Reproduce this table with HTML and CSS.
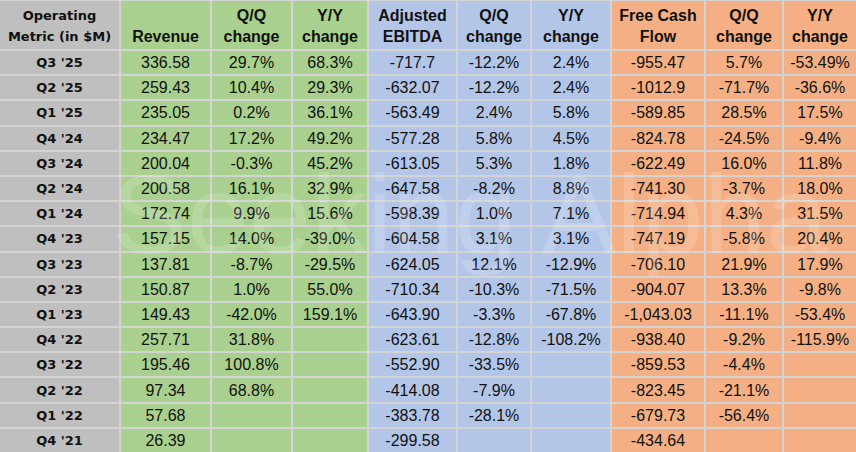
FILE: index.html
```html
<!DOCTYPE html>
<html>
<head>
<meta charset="utf-8">
<link rel="stylesheet" href="styles.css">
</head>
<body>
<div class="wrap">
  <div class="table">
    <div class="c h g"><span class="lbl">Operating<br>Metric (in $M)</span></div>
    <div class="c h gr">Revenue</div>
    <div class="c h gr">Q/Q<br>change</div>
    <div class="c h gr">Y/Y<br>change</div>
    <div class="c h bl">Adjusted<br>EBITDA</div>
    <div class="c h bl">Q/Q<br>change</div>
    <div class="c h bl">Y/Y<br>change</div>
    <div class="c h or">Free Cash<br>Flow</div>
    <div class="c h or">Q/Q<br>change</div>
    <div class="c h or">Y/Y<br>change</div>

    <div class="c q g">Q3 '25</div><div class="c gr">336.58</div><div class="c gr">29.7%</div><div class="c gr">68.3%</div><div class="c bl">-717.7</div><div class="c bl">-12.2%</div><div class="c bl">2.4%</div><div class="c or">-955.47</div><div class="c or">5.7%</div><div class="c or">-53.49%</div>
    <div class="c q g">Q2 '25</div><div class="c gr">259.43</div><div class="c gr">10.4%</div><div class="c gr">29.3%</div><div class="c bl">-632.07</div><div class="c bl">-12.2%</div><div class="c bl">2.4%</div><div class="c or">-1012.9</div><div class="c or">-71.7%</div><div class="c or">-36.6%</div>
    <div class="c q g">Q1 '25</div><div class="c gr">235.05</div><div class="c gr">0.2%</div><div class="c gr">36.1%</div><div class="c bl">-563.49</div><div class="c bl">2.4%</div><div class="c bl">5.8%</div><div class="c or">-589.85</div><div class="c or">28.5%</div><div class="c or">17.5%</div>
    <div class="c q g">Q4 '24</div><div class="c gr">234.47</div><div class="c gr">17.2%</div><div class="c gr">49.2%</div><div class="c bl">-577.28</div><div class="c bl">5.8%</div><div class="c bl">4.5%</div><div class="c or">-824.78</div><div class="c or">-24.5%</div><div class="c or">-9.4%</div>
    <div class="c q g">Q3 '24</div><div class="c gr">200.04</div><div class="c gr">-0.3%</div><div class="c gr">45.2%</div><div class="c bl">-613.05</div><div class="c bl">5.3%</div><div class="c bl">1.8%</div><div class="c or">-622.49</div><div class="c or">16.0%</div><div class="c or">11.8%</div>
    <div class="c q g">Q2 '24</div><div class="c gr">200.58</div><div class="c gr">16.1%</div><div class="c gr">32.9%</div><div class="c bl">-647.58</div><div class="c bl">-8.2%</div><div class="c bl">8.8%</div><div class="c or">-741.30</div><div class="c or">-3.7%</div><div class="c or">18.0%</div>
    <div class="c q g">Q1 '24</div><div class="c gr">172.74</div><div class="c gr">9.9%</div><div class="c gr">15.6%</div><div class="c bl">-598.39</div><div class="c bl">1.0%</div><div class="c bl">7.1%</div><div class="c or">-714.94</div><div class="c or">4.3%</div><div class="c or">31.5%</div>
    <div class="c q g">Q4 '23</div><div class="c gr">157.15</div><div class="c gr">14.0%</div><div class="c gr">-39.0%</div><div class="c bl">-604.58</div><div class="c bl">3.1%</div><div class="c bl">3.1%</div><div class="c or">-747.19</div><div class="c or">-5.8%</div><div class="c or">20.4%</div>
    <div class="c q g">Q3 '23</div><div class="c gr">137.81</div><div class="c gr">-8.7%</div><div class="c gr">-29.5%</div><div class="c bl">-624.05</div><div class="c bl">12.1%</div><div class="c bl">-12.9%</div><div class="c or">-706.10</div><div class="c or">21.9%</div><div class="c or">17.9%</div>
    <div class="c q g">Q2 '23</div><div class="c gr">150.87</div><div class="c gr">1.0%</div><div class="c gr">55.0%</div><div class="c bl">-710.34</div><div class="c bl">-10.3%</div><div class="c bl">-71.5%</div><div class="c or">-904.07</div><div class="c or">13.3%</div><div class="c or">-9.8%</div>
    <div class="c q g">Q1 '23</div><div class="c gr">149.43</div><div class="c gr">-42.0%</div><div class="c gr">159.1%</div><div class="c bl">-643.90</div><div class="c bl">-3.3%</div><div class="c bl">-67.8%</div><div class="c or">-1,043.03</div><div class="c or">-11.1%</div><div class="c or">-53.4%</div>
    <div class="c q g">Q4 '22</div><div class="c gr">257.71</div><div class="c gr">31.8%</div><div class="c gr"></div><div class="c bl">-623.61</div><div class="c bl">-12.8%</div><div class="c bl">-108.2%</div><div class="c or">-938.40</div><div class="c or">-9.2%</div><div class="c or">-115.9%</div>
    <div class="c q g">Q3 '22</div><div class="c gr">195.46</div><div class="c gr">100.8%</div><div class="c gr"></div><div class="c bl">-552.90</div><div class="c bl">-33.5%</div><div class="c bl"></div><div class="c or">-859.53</div><div class="c or">-4.4%</div><div class="c or"></div>
    <div class="c q g">Q2 '22</div><div class="c gr">97.34</div><div class="c gr">68.8%</div><div class="c gr"></div><div class="c bl">-414.08</div><div class="c bl">-7.9%</div><div class="c bl"></div><div class="c or">-823.45</div><div class="c or">-21.1%</div><div class="c or"></div>
    <div class="c q g">Q1 '22</div><div class="c gr">57.68</div><div class="c gr"></div><div class="c gr"></div><div class="c bl">-383.78</div><div class="c bl">-28.1%</div><div class="c bl"></div><div class="c or">-679.73</div><div class="c or">-56.4%</div><div class="c or"></div>
    <div class="c q g">Q4 '21</div><div class="c gr">26.39</div><div class="c gr"></div><div class="c gr"></div><div class="c bl">-299.58</div><div class="c bl"></div><div class="c bl"></div><div class="c or">-434.64</div><div class="c or"></div><div class="c or"></div>
  </div>
  <div class="watermark">Seeking Alpha</div>
</div>
</body>
</html>
```

FILE: styles.css
```css
html, body {
  margin: 0;
  padding: 0;
  background: #ffffff;
}
.wrap {
  position: relative;
  width: 856px;
  height: 452px;
  overflow: hidden;
}
.table {
  display: grid;
  grid-template-columns: 119px 89px 79px 74px 87px 72px 78px 92px 76px 72px;
  grid-template-rows: 48px repeat(16, 1fr);
  gap: 2px;
  padding-top: 1px;
  height: 452px;
  box-sizing: border-box;
  background: #d4d4d4;
  font-family: "Liberation Sans", Arial, sans-serif;
  font-size: 16px;
  color: #111111;
}
.c {
  display: flex;
  align-items: center;
  justify-content: center;
  text-align: center;
  white-space: nowrap;
  line-height: 18px;
  padding-top: 1px;
}
.h {
  align-items: flex-end;
  font-weight: bold;
  line-height: 21px;
  padding-bottom: 2px;
  box-sizing: border-box;
}
.h.g {
  font-family: "DejaVu Sans", Verdana, sans-serif;
  font-size: 13px;
}
.q {
  font-family: "DejaVu Sans", Verdana, sans-serif;
  font-weight: bold;
  font-size: 13px;
}
.g { background: #bfbfbf; }
.gr { background: #a9d08e; }
.bl { background: #b4c6e7; }
.or { background: #f4b084; }
.watermark {
  position: absolute;
  left: 112px;
  top: 150px;
  font-family: "Liberation Sans", Arial, sans-serif;
  font-size: 112px;
  line-height: 130px;
  color: rgba(255, 255, 255, 0.16);
  white-space: nowrap;
  pointer-events: none;
}
```
